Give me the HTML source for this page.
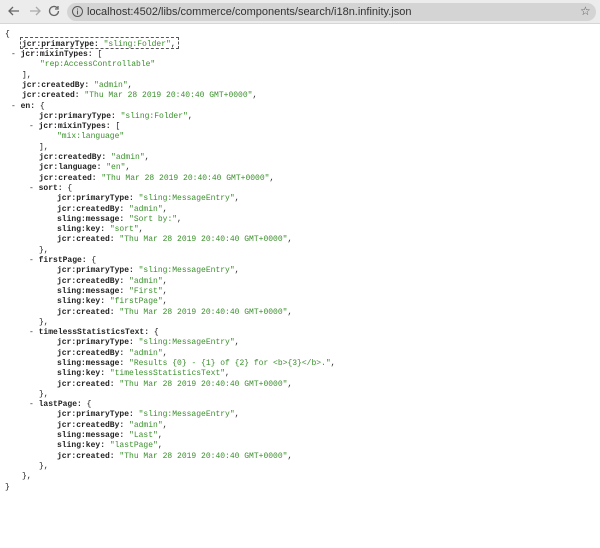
<!DOCTYPE html>
<html><head><meta charset="utf-8"><style>
html,body{margin:0;padding:0;width:600px;height:548px;overflow:hidden;background:#fff}
.bar{position:absolute;left:0;top:0;width:600px;height:23px;background:#ececec;border-bottom:1px solid #d6d6d6}
.pill{position:absolute;left:67px;top:3px;width:529px;height:18px;border-radius:9px;background:#d4d4d4}
.url{position:absolute;left:87px;top:4px;font:11px "Liberation Sans",sans-serif;color:#333;line-height:16px}
.ic{position:absolute;top:3px}
#c{position:absolute;left:0;top:29.5px;font:8px "Liberation Mono",monospace;color:#222;line-height:10.3px}
.l{position:relative;height:10.3px}
.l span{position:absolute;top:0;white-space:pre;line-height:10.3px;height:10.3px}
.boxd{position:absolute;left:20px;top:37px;width:157px;height:10px;border:1px dashed #555}
b{font-weight:bold;color:#222}
i{font-style:normal;color:#3a8f2c}
.v{color:#3a8f2c}
</style></head><body>
<div class="bar">
<svg class="ic" style="left:6px" width="16" height="16" viewBox="0 0 16 16"><path d="M13 8H3M7 4L3 8l4 4" stroke="#666" stroke-width="1.3" fill="none"/></svg>
<svg class="ic" style="left:27px" width="16" height="16" viewBox="0 0 16 16"><path d="M3 8h10M9 4l4 4-4 4" stroke="#aaa" stroke-width="1.3" fill="none"/></svg>
<svg class="ic" style="left:46px" width="16" height="16" viewBox="0 0 16 16"><path d="M12.5 8a4.5 4.5 0 1 1-1.3-3.2M12 3v3h-3" stroke="#666" stroke-width="1.3" fill="none"/></svg>
<div class="pill"></div>
<svg class="ic" style="left:71px;top:5px" width="13" height="13" viewBox="0 0 13 13"><circle cx="6.5" cy="6.5" r="5" stroke="#555" fill="none"/><path d="M6.5 5.5v4M6.5 3.5v1" stroke="#555"/></svg>
<div class="url">localhost:4502/libs/commerce/components/search/i18n.infinity.json</div>
<div style="position:absolute;left:580px;top:4px;font:12px 'DejaVu Sans',sans-serif;color:#555">☆</div>
</div>
<div class="boxd"></div>
<div id="c">
<div class="l"><span style="left:5px">{</span></div>
<div class="l"><span style="left:22px"><b>jcr:primaryType:</b> <i>"sling:Folder"</i>,</span></div>
<div class="l"><span style="left:11px">- <b>jcr:mixinTypes:</b> [</span></div>
<div class="l"><span style="left:40px" class="v">"rep:AccessControllable"</span></div>
<div class="l"><span style="left:22px">],</span></div>
<div class="l"><span style="left:22px"><b>jcr:createdBy:</b> <i>"admin"</i>,</span></div>
<div class="l"><span style="left:22px"><b>jcr:created:</b> <i>"Thu Mar 28 2019 20:40:40 GMT+0000"</i>,</span></div>
<div class="l"><span style="left:11px">- <b>en:</b> {</span></div>
<div class="l"><span style="left:39px"><b>jcr:primaryType:</b> <i>"sling:Folder"</i>,</span></div>
<div class="l"><span style="left:29px">- <b>jcr:mixinTypes:</b> [</span></div>
<div class="l"><span style="left:57px" class="v">"mix:language"</span></div>
<div class="l"><span style="left:39px">],</span></div>
<div class="l"><span style="left:39px"><b>jcr:createdBy:</b> <i>"admin"</i>,</span></div>
<div class="l"><span style="left:39px"><b>jcr:language:</b> <i>"en"</i>,</span></div>
<div class="l"><span style="left:39px"><b>jcr:created:</b> <i>"Thu Mar 28 2019 20:40:40 GMT+0000"</i>,</span></div>
<div class="l"><span style="left:29px">- <b>sort:</b> {</span></div>
<div class="l"><span style="left:57px"><b>jcr:primaryType:</b> <i>"sling:MessageEntry"</i>,</span></div>
<div class="l"><span style="left:57px"><b>jcr:createdBy:</b> <i>"admin"</i>,</span></div>
<div class="l"><span style="left:57px"><b>sling:message:</b> <i>"Sort by:"</i>,</span></div>
<div class="l"><span style="left:57px"><b>sling:key:</b> <i>"sort"</i>,</span></div>
<div class="l"><span style="left:57px"><b>jcr:created:</b> <i>"Thu Mar 28 2019 20:40:40 GMT+0000"</i>,</span></div>
<div class="l"><span style="left:39px">},</span></div>
<div class="l"><span style="left:29px">- <b>firstPage:</b> {</span></div>
<div class="l"><span style="left:57px"><b>jcr:primaryType:</b> <i>"sling:MessageEntry"</i>,</span></div>
<div class="l"><span style="left:57px"><b>jcr:createdBy:</b> <i>"admin"</i>,</span></div>
<div class="l"><span style="left:57px"><b>sling:message:</b> <i>"First"</i>,</span></div>
<div class="l"><span style="left:57px"><b>sling:key:</b> <i>"firstPage"</i>,</span></div>
<div class="l"><span style="left:57px"><b>jcr:created:</b> <i>"Thu Mar 28 2019 20:40:40 GMT+0000"</i>,</span></div>
<div class="l"><span style="left:39px">},</span></div>
<div class="l"><span style="left:29px">- <b>timelessStatisticsText:</b> {</span></div>
<div class="l"><span style="left:57px"><b>jcr:primaryType:</b> <i>"sling:MessageEntry"</i>,</span></div>
<div class="l"><span style="left:57px"><b>jcr:createdBy:</b> <i>"admin"</i>,</span></div>
<div class="l"><span style="left:57px"><b>sling:message:</b> <i>"Results {0} - {1} of {2} for &lt;b&gt;{3}&lt;/b&gt;."</i>,</span></div>
<div class="l"><span style="left:57px"><b>sling:key:</b> <i>"timelessStatisticsText"</i>,</span></div>
<div class="l"><span style="left:57px"><b>jcr:created:</b> <i>"Thu Mar 28 2019 20:40:40 GMT+0000"</i>,</span></div>
<div class="l"><span style="left:39px">},</span></div>
<div class="l"><span style="left:29px">- <b>lastPage:</b> {</span></div>
<div class="l"><span style="left:57px"><b>jcr:primaryType:</b> <i>"sling:MessageEntry"</i>,</span></div>
<div class="l"><span style="left:57px"><b>jcr:createdBy:</b> <i>"admin"</i>,</span></div>
<div class="l"><span style="left:57px"><b>sling:message:</b> <i>"Last"</i>,</span></div>
<div class="l"><span style="left:57px"><b>sling:key:</b> <i>"lastPage"</i>,</span></div>
<div class="l"><span style="left:57px"><b>jcr:created:</b> <i>"Thu Mar 28 2019 20:40:40 GMT+0000"</i>,</span></div>
<div class="l"><span style="left:39px">},</span></div>
<div class="l"><span style="left:22px">},</span></div>
<div class="l"><span style="left:5px">}</span></div>
</div>
</body></html>
